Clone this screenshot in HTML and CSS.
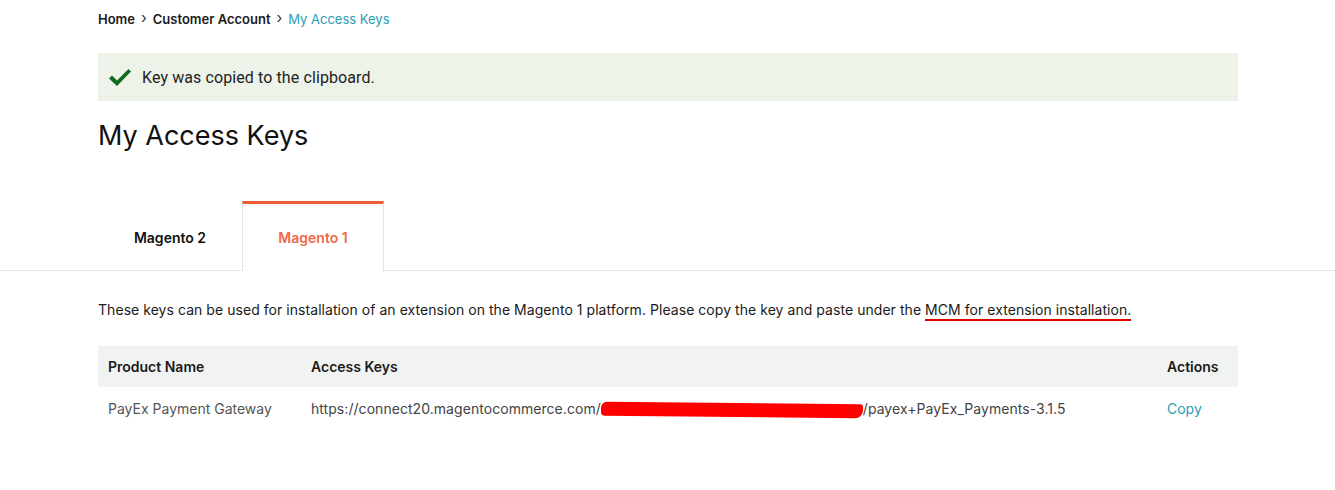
FILE: index.html
```html
<!DOCTYPE html>
<html>
<head>
<meta charset="utf-8">
<link rel="stylesheet" href="styles.css">
</head>
<body>
<div class="container">
  <nav class="breadcrumbs">
    <a class="crumb" href="#">Home</a>
    <span class="sep">›</span>
    <a class="crumb" href="#">Customer Account</a>
    <span class="sep">›</span>
    <span class="crumb current">My Access Keys</span>
  </nav>
  <div class="message">
    <svg class="check" width="24" height="20" viewBox="0 0 24 20"><path d="M1 10.5 L4 7.5 L9 12.5 L20.5 1 L23 3.5 L9 18 Z" fill="#0c6b1c"/></svg>
    <span>Key was copied to the clipboard.</span>
  </div>
  <h1 class="title">My Access Keys</h1>
</div>
<div class="tabbar">
  <div class="container tabs">
    <div class="tab">Magento 2</div>
    <div class="tab active">Magento 1</div>
  </div>
</div>
<div class="container">
  <p class="intro">These keys can be used for installation of an extension on the Magento 1 platform. Please copy the key and paste under the <span class="marked">MCM for extension installation.</span></p>
  <table class="keys">
    <thead>
      <tr><th class="c-name">Product Name</th><th class="c-key">Access Keys</th><th class="c-act">Actions</th></tr>
    </thead>
    <tbody>
      <tr>
        <td class="c-name name">PayEx Payment Gateway</td>
        <td class="c-key key">https://connect20.magentocommerce.com/<span class="redact"></span>/payex+PayEx_Payments-3.1.5</td>
        <td class="c-act"><a class="copy" href="#">Copy</a></td>
      </tr>
    </tbody>
  </table>
</div>
</body>
</html>
```
FILE: styles.css
```css
* { box-sizing: border-box; }
body {
  margin: 0;
  font-family: Inter, "Noto Sans", sans-serif;
  color: #1a1a1a;
  background: #fff;
}
.container {
  width: 1140px;
  margin-left: 98px;
}
.breadcrumbs {
  display: flex;
  align-items: center;
  gap: 6px;
  padding-top: 9px;
  height: 28px;
  font-size: 13px;
}
.crumb {
  color: #1a1a1a;
  font-weight: 600;
  text-decoration: none;
}
.crumb.current {
  color: #2b9db3;
  font-weight: 400;
}
.sep {
  color: #333;
  font-size: 15px;
  margin-top: -2px;
}
.message {
  margin-top: 25px;
  height: 48px;
  background: #eef3e9;
  display: flex;
  align-items: center;
  padding-left: 10px;
  gap: 10px;
  font-family: Roboto, sans-serif;
  font-size: 16px;
  letter-spacing: 0.1px;
  color: #222;
}
.check { margin-top: 2px; }
.title {
  margin: 18px 0 0;
  font-size: 27px;
  font-weight: 400;
  line-height: 34px;
  color: #111;
}
.tabbar {
  margin-top: 48px;
  border-bottom: 1px solid #e3e3e3;
}
.tabs {
  display: flex;
}
.tab {
  width: 144px;
  height: 69px;
  display: flex;
  align-items: center;
  justify-content: center;
  font-size: 14px;
  font-weight: 600;
  color: #111;
  padding-top: 3px;
}
.tab.active {
  width: 142px;
  color: #f0684a;
  border: 1px solid #e3e3e3;
  border-top: 3px solid #eb5f35;
  border-bottom: 0;
  margin-bottom: -1px;
  height: 70px;
  padding-top: 0;
  background: #fff;
}
.intro {
  margin: 30px 0 0;
  font-size: 14px;
  line-height: 18px;
  letter-spacing: 0.05px;
  color: #1a1a1a;
}
.marked {
  border-bottom: 2px solid #e30000;
  padding-bottom: 1px;
}
.keys {
  margin-top: 27px;
  width: 100%;
  border-collapse: collapse;
  font-size: 14px;
}
.keys th {
  background: #f1f2f2;
  text-align: left;
  font-weight: 600;
  height: 41px;
  padding: 0 10px;
  color: #1a1a1a;
}
.keys td {
  height: 42px;
  padding: 0 10px;
}
.c-name { width: 203px; }
.c-act { width: 81px; }
.name { color: #555; }
.key { color: #444; letter-spacing: 0.05px; }
.redact {
  display: inline-block;
  width: 262px;
  height: 14px;
  background: #ff0000;
  vertical-align: -3px;
  border-radius: 6px 3px 8px 4px;
  transform: rotate(0.6deg);
}
.copy {
  color: #2b9db3;
  text-decoration: none;
}
```
